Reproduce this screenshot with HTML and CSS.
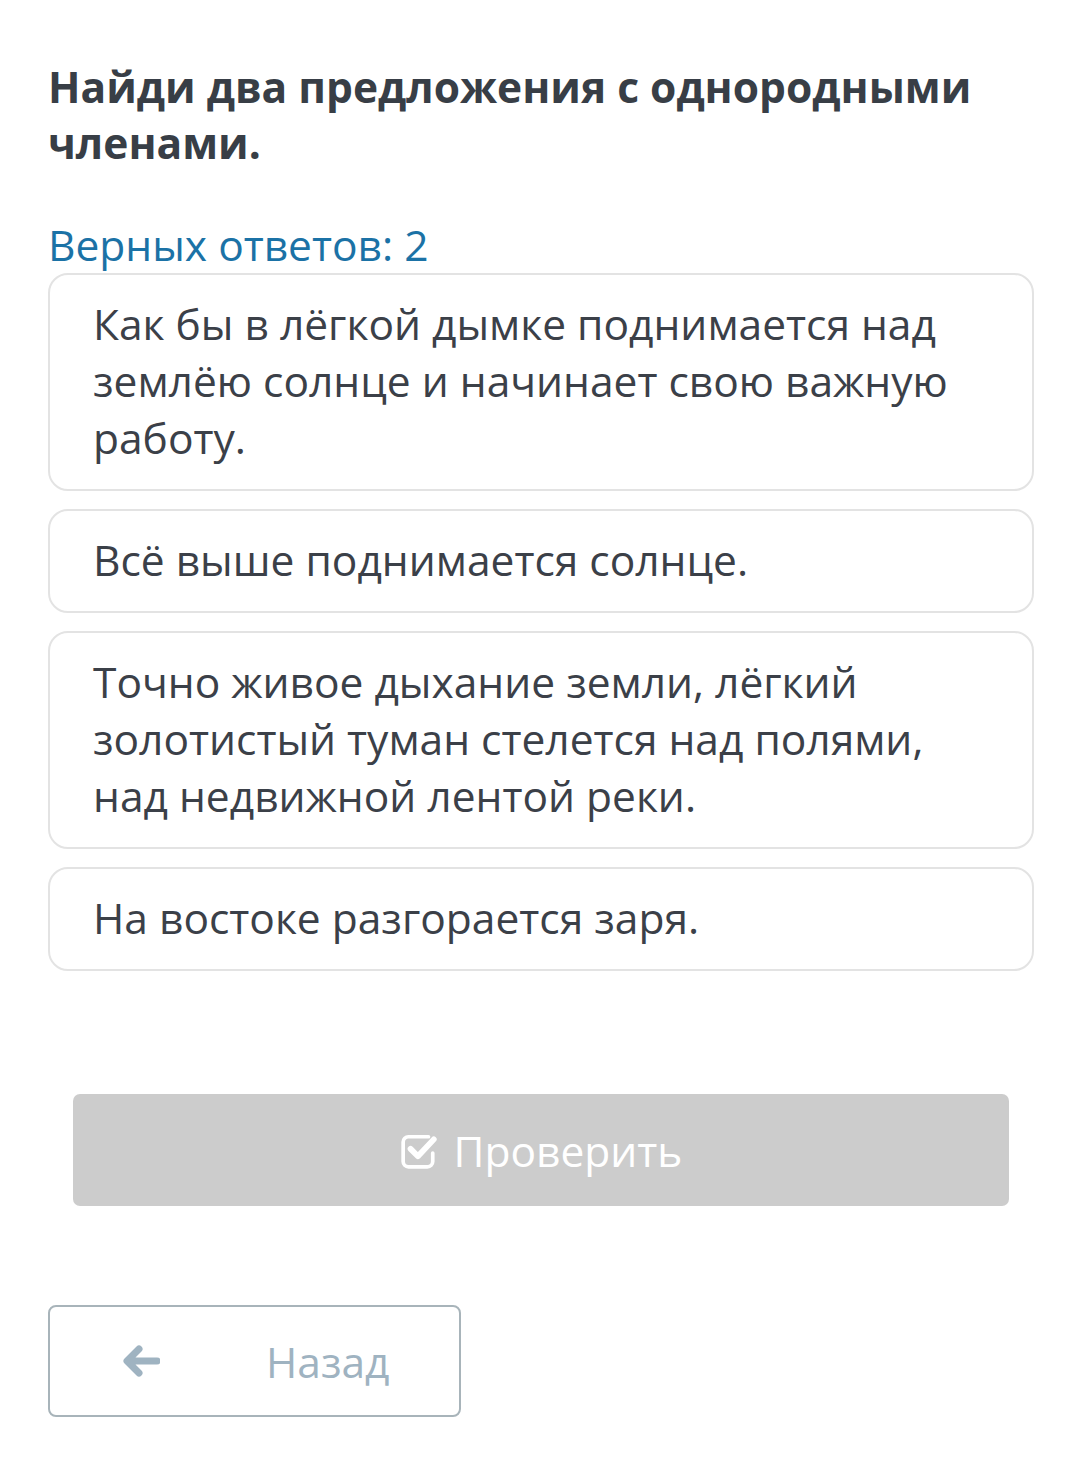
FILE: index.html
```html
<!DOCTYPE html>
<html lang="ru">
<head>
    <meta charset="UTF-8">
    <meta name="viewport" content="width=device-width, initial-scale=1.0">
    <title>Задание</title>
    <link rel="stylesheet" href="styles.css">
</head>
<body>
    <div class="task">
        <h1 class="question">Найди два предложения с однородными членами.</h1>
        <p class="hint">Верных ответов: 2</p>
        <div class="answers">
            <div class="answer">Как бы в лёгкой дымке поднимается над землёю солнце и начинает свою важную работу.</div>
            <div class="answer">Всё выше поднимается солнце.</div>
            <div class="answer">Точно живое дыхание земли, лёгкий золотистый туман стелется над полями, над недвижной лентой реки.</div>
            <div class="answer">На востоке разгорается заря.</div>
        </div>
        <button class="check-btn">
            <svg class="check-icon" viewBox="0 0 36 34" width="38" height="36">
                <!-- квадрат с разрывом в правом верхнем углу -->
                <path d="M27 3.5 H8 a5 5 0 0 0 -5 5 V27 a5 5 0 0 0 5 5 H26 a5 5 0 0 0 5 -5 V19" fill="none" stroke="#fff" stroke-width="3.5" stroke-linecap="round"/>
                <path d="M10 15 L17 22 L32 6" fill="none" stroke="#fff" stroke-width="5.5" stroke-linecap="round" stroke-linejoin="round"/>
            </svg>
            Проверить
        </button>
        <button class="back-btn">
            <svg class="back-icon" viewBox="0 0 38 32" width="38" height="32">
                <path d="M35 16 H6 M17 4 L5 16 L17 28" fill="none" stroke="#9fb3c1" stroke-width="7" stroke-linecap="round" stroke-linejoin="round"/>
            </svg>
            <span>Назад</span>
        </button>
    </div>
</body>
</html>
```

FILE: styles.css
```css
body {
    margin: 0;
    background-color: #ffffff;
    font-family: "Open Sans", "Noto Sans", sans-serif;
}
.task {
    padding: 59px 46px 40px 48px;
}
.question {
    margin: 0;
    font-size: 42.5px;
    line-height: 56px;
    font-weight: 700;
    color: #383e46;
}
.hint {
    margin: 50px 0 4px 0;
    font-size: 42.5px;
    line-height: 48px;
    color: #1b72a6;
}
.answers {
    display: flex;
    flex-direction: column;
    gap: 18px;
}
.answer {
    border: 2px solid #e3e3e3;
    border-radius: 20px;
    padding: 20px 40px 23px 43px;
    font-size: 42.5px;
    line-height: 57px;
    color: #3b4048;
}
.check-btn {
    display: flex;
    align-items: center;
    justify-content: center;
    gap: 16px;
    width: calc(100% - 50px);
    height: 112px;
    margin: 123px 25px 0 25px;
    border: none;
    border-radius: 7px;
    background-color: #cccccc;
    color: #ffffff;
    font-family: inherit;
    font-size: 42.5px;
}
.check-icon {
    margin-top: 2px;
}
.back-btn {
    display: flex;
    align-items: center;
    gap: 106px;
    width: 413px;
    height: 112px;
    margin-top: 99px;
    padding: 0 0 0 72px;
    border: 2px solid #a8b4ba;
    border-radius: 8px;
    background-color: #ffffff;
    color: #9fb3c1;
    font-family: inherit;
    font-size: 42.5px;
}
```
